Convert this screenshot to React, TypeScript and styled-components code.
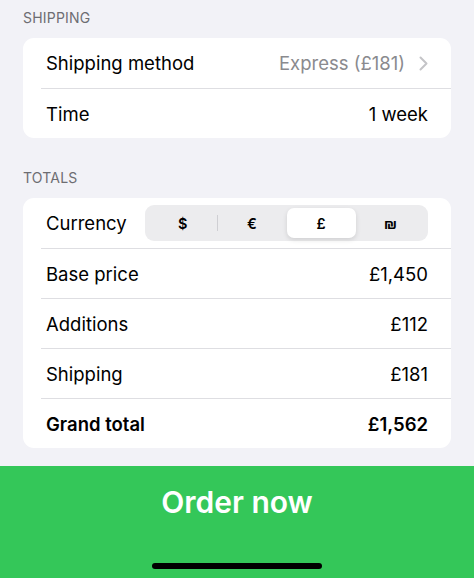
import { useState } from 'react';
import styled, { createGlobalStyle } from 'styled-components';

const GlobalStyle = createGlobalStyle`
  html, body {
    margin: 0;
    padding: 0;
    background: #f2f2f7;
    font-family: Inter, "Liberation Sans", sans-serif;
    -webkit-font-smoothing: antialiased;
  }
`;

const Screen = styled.div`
  display: flex;
  flex-direction: column;
  width: 474px;
  height: 578px;
  overflow: hidden;
  background: #f2f2f7;
`;

const Content = styled.div`
  flex: 1;
  display: flex;
  flex-direction: column;
  padding: 0 23px;
`;

const SectionTitle = styled.div`
  font-size: 14px;
  color: #6d6d72;
  text-transform: uppercase;
  letter-spacing: 0.2px;
  padding: 9px 0 0 0;
  height: 28px;
  line-height: 17px;
  box-sizing: border-box;
  margin-top: ${({ $top }: { $top: number }) => $top}px;
`;

const Card = styled.div`
  background: #fff;
  border-radius: 11px;
  overflow: hidden;
  margin-top: 10px;
`;

const Row = styled.div`
  display: flex;
  align-items: center;
  justify-content: space-between;
  box-sizing: border-box;
  height: 50px;
  margin-left: 18px;
  padding: 0 23px 0 5px;
  font-size: 18.5px;
  color: #000;
  font-weight: ${({ $bold }: { $bold?: boolean }) => ($bold ? 600 : 400)};
  & + & {
    border-top: 1px solid #dedee2;
  }
`;

const Value = styled.span<{ $muted?: boolean }>`
  display: flex;
  align-items: center;
  gap: 14px;
  color: ${({ $muted }) => ($muted ? '#8a8a8e' : '#000')};
`;

const Segmented = styled.div`
  display: grid;
  grid-template-columns: repeat(4, 1fr);
  width: 283px;
  height: 36px;
  padding: 3px;
  box-sizing: border-box;
  background: #ececee;
  border-radius: 9px;
`;

const Segment = styled.button<{ $active: boolean; $divider: boolean }>`
  border: none;
  background: ${({ $active }) => ($active ? '#fff' : 'transparent')};
  border-radius: 7px;
  box-shadow: ${({ $active }) => ($active ? '0 2px 5px rgba(0,0,0,0.12)' : 'none')};
  font-family: Inter, "Liberation Sans", sans-serif;
  font-size: 14.5px;
  font-weight: 600;
  color: #000;
  position: relative;
  padding: 0;
  &::before {
    content: '';
    display: ${({ $divider }) => ($divider ? 'block' : 'none')};
    position: absolute;
    left: 0;
    top: 7px;
    bottom: 7px;
    width: 1px;
    background: #cfcfd3;
  }
`;

const Chevron = () => (
  <svg width="9" height="15" viewBox="0 0 9 15" fill="none">
    <path d="M1.5 1.5L7.5 7.5L1.5 13.5" stroke="#c4c4c7" strokeWidth="2" strokeLinecap="round" strokeLinejoin="round" />
  </svg>
);

const OrderBar = styled.div`
  height: 112px;
  background: #34c759;
  display: flex;
  flex-direction: column;
  align-items: center;
`;

const OrderButton = styled.button`
  border: none;
  background: transparent;
  color: #fff;
  font-family: Inter, "Liberation Sans", sans-serif;
  font-size: 30px;
  font-weight: 600;
  height: 72px;
  padding: 0;
  width: 100%;
`;

const HomeIndicator = styled.div`
  width: 170px;
  height: 6px;
  border-radius: 3px;
  background: #000;
  margin-top: 25px;
`;

const currencies = ['$', '€', '£', '₪'];

export default function App() {
  const [currency, setCurrency] = useState(2);
  return (
    <Screen>
      <GlobalStyle />
      <Content>
        <SectionTitle $top={0}>Shipping</SectionTitle>
        <Card>
          <Row>
            <span>Shipping method</span>
            <Value $muted>
              Express (£181) <Chevron />
            </Value>
          </Row>
          <Row>
            <span>Time</span>
            <Value>1 week</Value>
          </Row>
        </Card>
        <SectionTitle $top={22}>Totals</SectionTitle>
        <Card>
          <Row>
            <span>Currency</span>
            <Segmented>
              {currencies.map((c, i) => (
                <Segment
                  key={c}
                  $active={i === currency}
                  $divider={i > 0 && i !== currency && i - 1 !== currency}
                  onClick={() => setCurrency(i)}
                >
                  {c}
                </Segment>
              ))}
            </Segmented>
          </Row>
          <Row>
            <span>Base price</span>
            <Value>£1,450</Value>
          </Row>
          <Row>
            <span>Additions</span>
            <Value>£112</Value>
          </Row>
          <Row>
            <span>Shipping</span>
            <Value>£181</Value>
          </Row>
          <Row $bold>
            <span>Grand total</span>
            <Value>£1,562</Value>
          </Row>
        </Card>
      </Content>
      <OrderBar>
        <OrderButton>Order now</OrderButton>
        <HomeIndicator />
      </OrderBar>
    </Screen>
  );
}
